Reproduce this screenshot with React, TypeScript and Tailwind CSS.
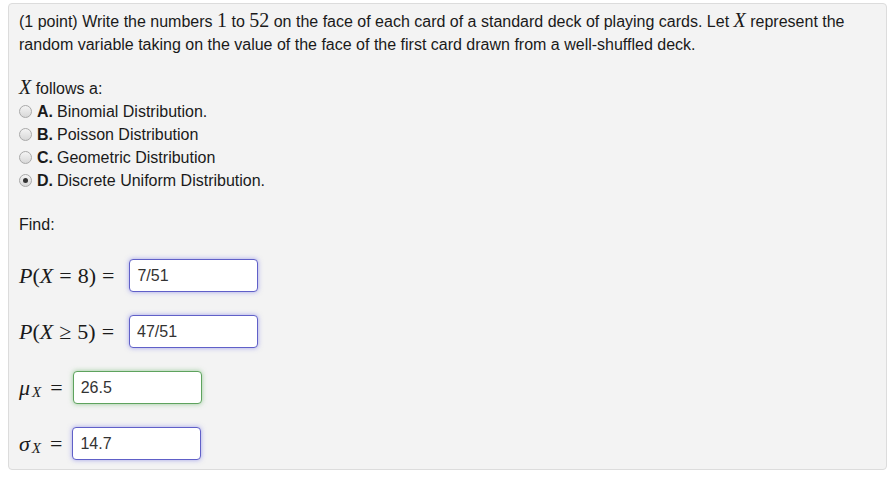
const serif = "font-['Liberation_Serif','Times_New_Roman',serif]";

function MathX() {
  return <span className={`${serif} italic text-[20px] leading-none`}>X</span>;
}

function Radio({ checked }: { checked?: boolean }) {
  return (
    <span className="mr-[5px] inline-flex h-[13px] w-[13px] items-center justify-center rounded-full border border-[#a9a9a9] bg-[linear-gradient(#f4f4f4,#d8d8d8)]">
      {checked && <span className="h-[5px] w-[5px] rounded-full bg-[#333]" />}
    </span>
  );
}

function AnswerBox({ value, tone }: { value: string; tone: 'blue' | 'green' }) {
  return (
    <div
      className={
        tone === 'blue'
          ? "flex h-[33px] w-[129px] items-center rounded-[4px] border border-[#6060c8] bg-white px-[7px] font-['Liberation_Sans',Arial,sans-serif] text-[16px] text-[#333] shadow-[0_0_5px_rgba(100,100,230,0.55)]"
          : "flex h-[33px] w-[129px] items-center rounded-[4px] border border-[#5ea35e] bg-white px-[7px] font-['Liberation_Sans',Arial,sans-serif] text-[16px] text-[#333] shadow-[0_0_5px_rgba(80,170,80,0.55)]"
      }
    >
      {value}
    </div>
  );
}

function Rel({ sign = '=' }: { sign?: string }) {
  return <span className="mx-[6px]">{sign}</span>;
}

export default function App() {
  const options = [
    { key: 'A.', label: 'Binomial Distribution.' },
    { key: 'B.', label: 'Poisson Distribution' },
    { key: 'C.', label: 'Geometric Distribution' },
    { key: 'D.', label: 'Discrete Uniform Distribution.', checked: true },
  ];

  return (
    <div className="h-[490px] w-[892px] bg-white pl-[8px] pr-[5px] pt-[3px] font-['Liberation_Sans',Arial,sans-serif] text-[#1a1a1a]">
      <div className="h-[467px] rounded-[4px] border border-[#dcdcdc] bg-[#f3f3f3] pl-[10px] pt-[5px]">
        <p className="text-[16px] leading-[23px]">
          (1 point) Write the numbers <span className={`${serif} text-[20px]`}>1</span> to{' '}
          <span className={`${serif} text-[20px]`}>52</span> on the face of each card of a standard deck of playing cards. Let{' '}
          <MathX /> represent the random variable taking on the value of the face of the first card drawn from a well-shuffled deck.
        </p>

        <div className="mt-[21px] text-[16px] leading-[23px]">
          <div>
            <MathX /> follows a:
          </div>
          {options.map((o) => (
            <div key={o.key} className="flex items-center">
              <Radio checked={o.checked} />
              <span className="mr-[4px] font-bold">{o.key}</span>
              {o.label}
            </div>
          ))}
        </div>

        <div className="mt-[21px] text-[16px] leading-[23px]">Find:</div>

        <div className={`${serif} mt-[23px] flex flex-col gap-[23px] text-[22px] text-[#1a1a1a]`}>
          <div className="flex items-center">
            <span className="mr-[9px]">
              <i>P</i>(<i>X</i>
              <Rel />
              8)
              <Rel />
            </span>
            <AnswerBox value="7/51" tone="blue" />
          </div>
          <div className="flex items-center">
            <span className="mr-[9px]">
              <i>P</i>(<i>X</i>
              <Rel sign="≥" />
              5)
              <Rel />
            </span>
            <AnswerBox value="47/51" tone="blue" />
          </div>
          <div className="flex items-center">
            <span className="mr-[4px] flex items-center">
              <i>μ</i>
              <i className="mt-[9px] ml-[2px] mr-[3px] text-[15px]">X</i>
              <Rel />
            </span>
            <AnswerBox value="26.5" tone="green" />
          </div>
          <div className="flex items-center">
            <span className="mr-[4px] flex items-center">
              <i>σ</i>
              <i className="mt-[9px] ml-[2px] mr-[3px] text-[15px]">X</i>
              <Rel />
            </span>
            <AnswerBox value="14.7" tone="blue" />
          </div>
        </div>
      </div>
    </div>
  );
}
